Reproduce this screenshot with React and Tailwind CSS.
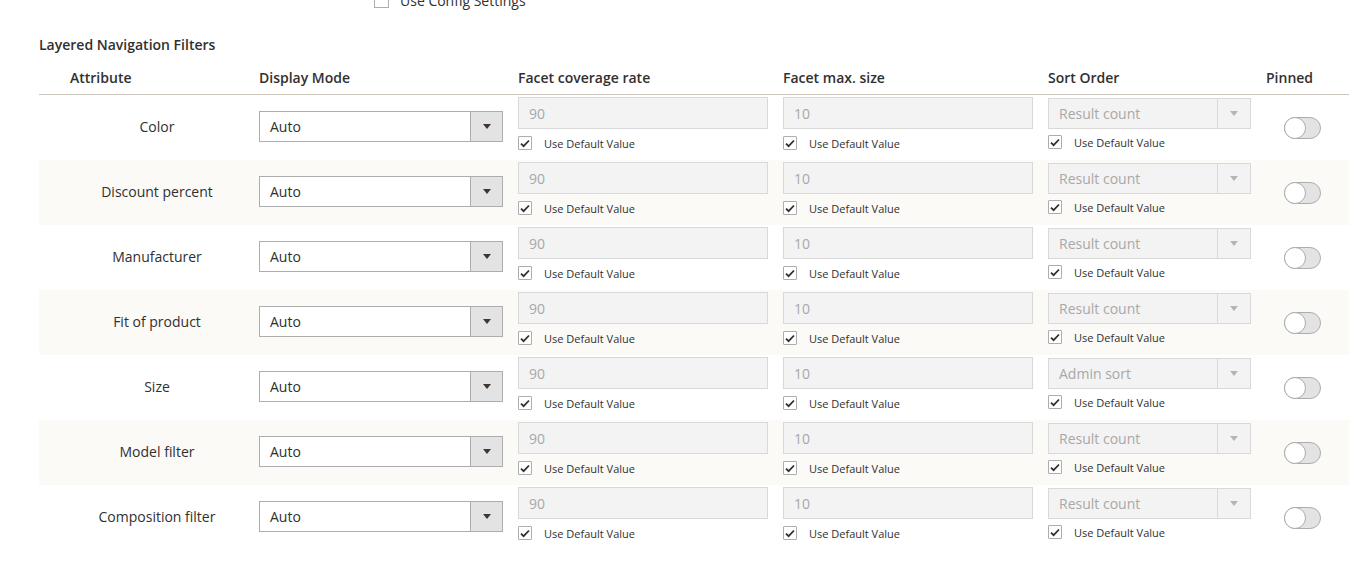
const ROWS = [
  { name: 'Color', sort: 'Result count', striped: false },
  { name: 'Discount percent', sort: 'Result count', striped: true },
  { name: 'Manufacturer', sort: 'Result count', striped: false },
  { name: 'Fit of product', sort: 'Result count', striped: true },
  { name: 'Size', sort: 'Admin sort', striped: false },
  { name: 'Model filter', sort: 'Result count', striped: true },
  { name: 'Composition filter', sort: 'Result count', striped: false },
]

function Caret({ light }) {
  return (
    <svg width="8" height="5" viewBox="0 0 8 5">
      <path d="M0 0h8L4 5z" fill={light ? '#b5b5b5' : '#41362f'} />
    </svg>
  )
}

function Check() {
  return (
    <span className="w-[14px] h-[14px] border border-[#adadad] bg-white rounded-[1px] flex items-center justify-center flex-shrink-0">
      <svg width="10" height="9" viewBox="0 0 10 9">
        <path d="M1 4.6l2.6 2.6L9 1.5" fill="none" stroke="#303030" strokeWidth="1.8" />
      </svg>
    </span>
  )
}

function DefaultValue() {
  return (
    <label className="flex items-center gap-[12px] mt-[7px] text-[11px] text-[#303030] leading-none">
      <Check />
      Use Default Value
    </label>
  )
}

function DisabledInput({ value }) {
  return (
    <div className="w-[250px] h-[32px] bg-[#f3f3f3] border border-[#d9d9d9] flex items-center px-[10px] text-[14px] text-[#a8a8a8]">
      {value}
    </div>
  )
}

function Row({ row }) {
  return (
    <div className={`flex h-[65px] ${row.striped ? 'bg-[#fbfaf7]' : ''}`}>
      <div className="w-[220px] flex items-center justify-center pl-[16px] pb-[2px] text-[14px] text-[#303030]">
        {row.name}
      </div>
      <div className="w-[259px] flex items-center pb-[2px]">
        <div className="w-[244px] h-[31px] border border-[#adadad] bg-white flex">
          <div className="flex-1 flex items-center px-[10px] text-[14px] text-[#303030]">Auto</div>
          <div className="w-[32px] bg-[#e3e3e3] border-l border-[#adadad] flex items-center justify-center">
            <Caret />
          </div>
        </div>
      </div>
      <div className="w-[265px] pt-[2px]">
        <DisabledInput value="90" />
        <DefaultValue />
      </div>
      <div className="w-[265px] pt-[2px]">
        <DisabledInput value="10" />
        <DefaultValue />
      </div>
      <div className="w-[218px] pt-[3px]">
        <div className="w-[203px] h-[31px] border border-[#d9d9d9] bg-[#f3f3f3] flex">
          <div className="flex-1 flex items-center px-[10px] text-[14px] text-[#a8a8a8]">{row.sort}</div>
          <div className="w-[33px] border-l border-[#d9d9d9] flex items-center justify-center">
            <Caret light />
          </div>
        </div>
        <div className="-mt-[1px]">
          <DefaultValue />
        </div>
      </div>
      <div className="flex-1 flex items-center pl-[18px]">
        <div className="relative w-[37px] h-[22px] rounded-full bg-[#e3e3e3] border border-[#adadad]">
          <div className="absolute -left-[1px] -top-[1px] w-[22px] h-[22px] rounded-full bg-white border border-[#adadad]" />
        </div>
      </div>
    </div>
  )
}

export default function App() {
  return (
    <div className="w-[1361px] h-[565px] bg-white overflow-hidden" style={{ fontFamily: '"Open Sans", "Noto Sans", sans-serif' }}>
      <div className="flex items-center gap-[11px] pl-[374px] -mt-[9px] h-[18px] text-[14px] text-[#303030]">
        <span className="w-[15px] h-[15px] border border-[#adadad] bg-white" />
        Use Config Settings
      </div>
      <div className="pl-[39px] pr-[12px]">
        <h3 className="mt-[26px] text-[14px] font-semibold text-[#303030] leading-[20px]">Layered Navigation Filters</h3>
        <div className="flex h-[32px] mt-[8px] pb-[2px] items-center border-b border-[#ccc5bb] text-[14px] font-semibold text-[#303030]">
          <div className="w-[220px] pl-[31px]">Attribute</div>
          <div className="w-[259px]">Display Mode</div>
          <div className="w-[265px]">Facet coverage rate</div>
          <div className="w-[265px]">Facet max. size</div>
          <div className="w-[218px]">Sort Order</div>
          <div className="flex-1">Pinned</div>
        </div>
        {ROWS.map((row) => (
          <Row key={row.name} row={row} />
        ))}
      </div>
    </div>
  )
}
